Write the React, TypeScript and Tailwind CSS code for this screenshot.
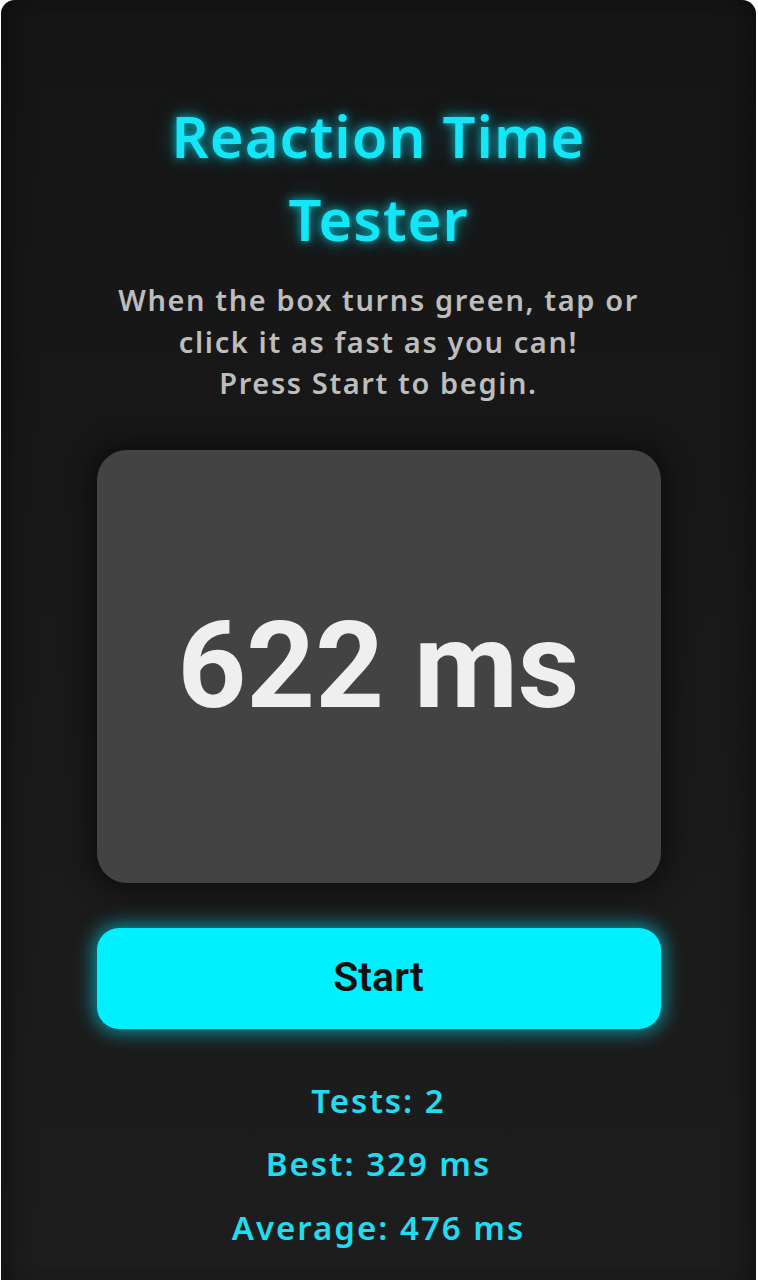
import React from 'react';

const stats = [
  { label: 'Tests', value: '2' },
  { label: 'Best', value: '329 ms' },
  { label: 'Average', value: '476 ms' },
];

export default function App() {
  return (
    <div className="min-h-[1280px] bg-white px-[1px]">
      <div className="min-h-[1280px] w-[755px] rounded-t-[14px] bg-gradient-to-b from-[#151515] to-[#1d1d1d] shadow-[inset_22px_0_24px_-14px_rgba(0,0,0,0.35),inset_-22px_0_24px_-14px_rgba(0,0,0,0.35)] pt-[94px] font-['Noto_Sans','Open_Sans',sans-serif]">
        {/* Heading */}
        <h1 className="mx-auto w-[480px] text-center text-[58px] font-semibold leading-[83px] tracking-[1px] text-[#13e7f7] [text-shadow:0_0_10px_rgba(0,229,255,0.75),0_0_22px_rgba(0,229,255,0.35)]">
          Reaction Time Tester
        </h1>
        <p className="mx-auto mt-[19px] w-[560px] text-center text-[29px] font-semibold leading-[41.5px] tracking-[1.6px] text-[#bdbdbd]">
          When the box turns green, tap or
          <br />
          click it as fast as you can!
          <br />
          Press Start to begin.
        </p>

        {/* Reaction box */}
        <div className="mx-auto mt-[46px] flex h-[433px] w-[564px] items-center justify-center rounded-[30px] bg-[#434343] shadow-[0_0_26px_8px_rgba(0,0,0,0.45)]">
          <span className="font-['Roboto',sans-serif] text-[120px] font-bold text-[#efefef]">622 ms</span>
        </div>

        <button className="mx-auto mt-[45px] flex h-[101px] w-[564px] items-center justify-center rounded-[22px] bg-[#00f0ff] font-['Roboto',sans-serif] text-[41px] font-semibold text-[#111] shadow-[0_0_18px_4px_rgba(0,230,255,0.55)]">
          Start
        </button>

        {/* Stats */}
        <div className="mt-[40px] flex flex-col items-center">
          {stats.map((s) => (
            <div key={s.label} className="text-[33px] font-semibold leading-[63.5px] tracking-[2px] text-[#1fdcf0]">
              {s.label}: {s.value}
            </div>
          ))}
        </div>
      </div>
    </div>
  );
}
